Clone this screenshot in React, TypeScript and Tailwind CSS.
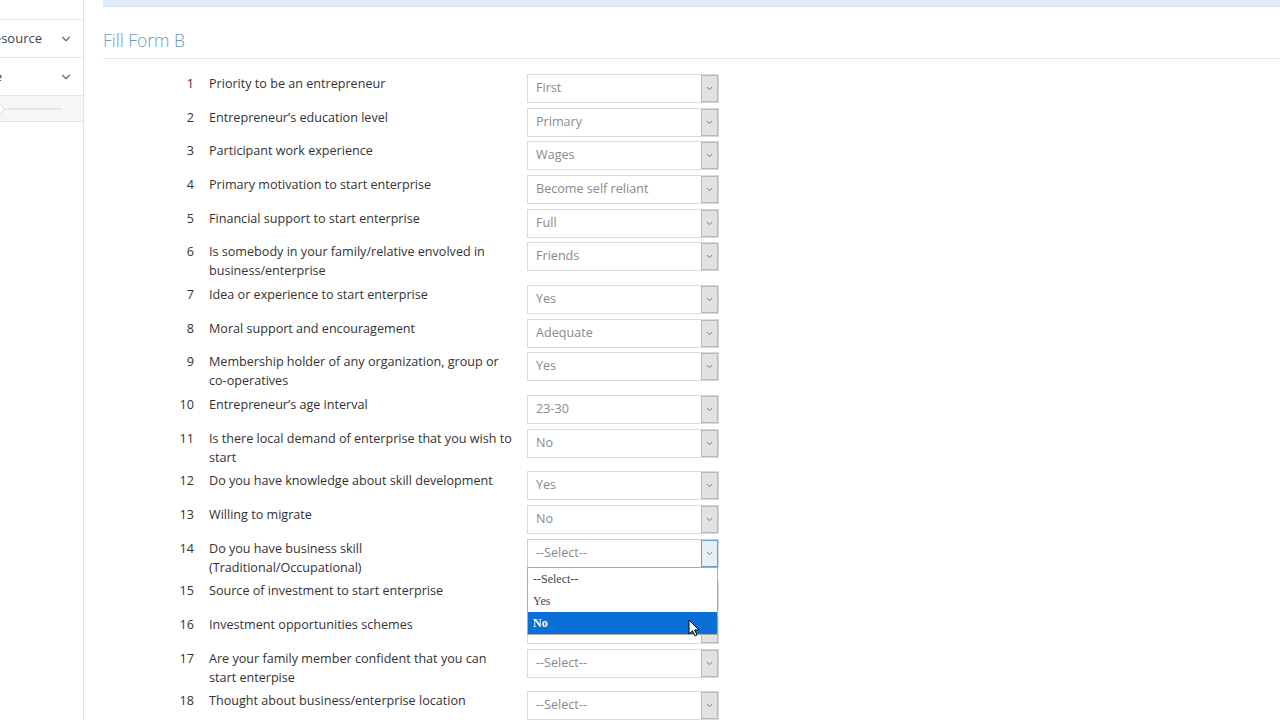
import { ChevronDown } from 'lucide-react'

interface Question {
  no: number
  lines: string[]
  value: string
}

const questions: Question[] = [
  { no: 1, lines: ['Priority to be an entrepreneur'], value: 'First' },
  { no: 2, lines: ['Entrepreneur’s education level'], value: 'Primary' },
  { no: 3, lines: ['Participant work experience'], value: 'Wages' },
  { no: 4, lines: ['Primary motivation to start enterprise'], value: 'Become self reliant' },
  { no: 5, lines: ['Financial support to start enterprise'], value: 'Full' },
  { no: 6, lines: ['Is somebody in your family/relative envolved in', 'business/enterprise'], value: 'Friends' },
  { no: 7, lines: ['Idea or experience to start enterprise'], value: 'Yes' },
  { no: 8, lines: ['Moral support and encouragement'], value: 'Adequate' },
  { no: 9, lines: ['Membership holder of any organization, group or', 'co-operatives'], value: 'Yes' },
  { no: 10, lines: ['Entrepreneur’s age interval'], value: '23-30' },
  { no: 11, lines: ['Is there local demand of enterprise that you wish to', 'start'], value: 'No' },
  { no: 12, lines: ['Do you have knowledge about skill development'], value: 'Yes' },
  { no: 13, lines: ['Willing to migrate'], value: 'No' },
  { no: 14, lines: ['Do you have business skill', '(Traditional/Occupational)'], value: '--Select--' },
  { no: 15, lines: ['Source of investment to start enterprise'], value: '--Select--' },
  { no: 16, lines: ['Investment opportunities schemes'], value: '--Select--' },
  { no: 17, lines: ['Are your family member confident that you can', 'start enterpise'], value: '--Select--' },
  { no: 18, lines: ['Thought about business/enterprise location'], value: '--Select--' },
]

function Caret() {
  return (
    <svg width="7" height="5" viewBox="0 0 7 5" fill="none">
      <path d="M0.8 1 L3.5 3.6 L6.2 1" stroke="#7a7a7a" strokeWidth="1" />
    </svg>
  )
}

// mouse pointer resting over the highlighted option
function Cursor() {
  return (
    <svg width="12" height="18" viewBox="0 0 12 18" className="absolute left-[160px] top-[51px]">
      <path d="M1 1 L1 15 L4.5 11.8 L7 17 L9 16 L6.6 11 L11 11 Z" fill="#fff" stroke="#000" strokeWidth="1" strokeLinejoin="round" />
    </svg>
  )
}

function SelectBox({ value, open }: { value: string; open?: boolean }) {
  return (
    <div className="relative w-[192px] shrink-0">
      <div
        className={
          open
            ? 'flex h-[29px] border border-[#efc88f] border-b-[#d8d8d8] border-r-[#d8d8d8] bg-white'
            : 'flex h-[29px] border border-[#dadada] bg-white'
        }
      >
        <div className="flex flex-1 items-center pl-[8px] text-[12.6px] text-[#8a8a8a]">{value}</div>
        <div
          className={
            open
              ? 'flex w-[17px] items-center justify-center border border-[#6a9fd4] bg-[#e6f0fa]'
              : 'flex w-[17px] items-center justify-center border border-[#b8b8b8] bg-[#e2e2e2]'
          }
        >
          <Caret />
        </div>
      </div>
      {open && (
        <div className="absolute left-0 top-[28px] z-10 w-[191px] border border-[#a9a9a9] bg-white font-['Liberation_Serif',serif] text-[12px]">
          <div className="flex h-[22px] items-center pl-[5px] text-[#444]">--Select--</div>
          <div className="flex h-[22px] items-center pl-[5px] text-[#444]">Yes</div>
          <div className="flex h-[22px] items-center bg-[#0a6fd6] pl-[5px] font-bold text-white">No</div>
          <Cursor />
        </div>
      )}
    </div>
  )
}

function Sidebar() {
  return (
    <div className="w-[84px] shrink-0 border-r border-[#e2e2e2] text-[13px] text-[#444]">
      <div className="flex h-[20px] items-start justify-end overflow-hidden border-b border-[#e6e6e6] pr-[12px]">
        <ChevronDown className="-mt-[10px] h-[14px] w-[14px] text-[#666]" />
      </div>
      <div className="flex h-[38px] items-center border-b border-[#e6e6e6]">
        <div className="flex w-[42px] justify-end overflow-hidden">
          <span className="whitespace-nowrap">Human Resource</span>
        </div>
        <ChevronDown className="ml-[17px] h-[14px] w-[14px] text-[#666]" />
      </div>
      <div className="flex h-[38px] items-center border-b border-[#e6e6e6]">
        <div className="flex w-[42px] justify-end overflow-hidden">
          <span className="mr-[40px] whitespace-nowrap">Finance</span>
        </div>
        <ChevronDown className="ml-[17px] h-[14px] w-[14px] text-[#666]" />
      </div>
      <div className="flex h-[26px] items-center border-b border-[#e2e2e2] bg-[#f6f6f6]">
        <div className="-ml-[6px] h-[10px] w-[10px] shrink-0 rounded-full border border-[#dcdcdc] bg-white" />
        <div className="h-[2px] w-[58px] bg-[#e8e8e8]" />
      </div>
    </div>
  )
}

export default function App() {
  return (
    <div className="flex h-[720px] overflow-hidden bg-white font-['Open_Sans',sans-serif] text-[#333]">
      <Sidebar />
      <div className="flex-1 pl-[19px]">
        <div className="h-[7px] border-b border-[#d3e2ef] bg-[#deeaf5]" />
        <div className="mt-[19px] border-b border-[#e6e6e6] pb-[4px]">
          <h1 className="text-[17.5px] font-light leading-[28px] text-[#6b9ac4]">Fill Form B</h1>
        </div>
        <div className="mt-[15px] pl-[67px]">
          {questions.map((q) => (
            <div key={q.no} className="mb-[4.67px] flex items-start">
              <div className="w-[24px] shrink-0 text-right text-[12.6px] leading-[19px]">{q.no}</div>
              <div className="ml-[15px] w-[306px] shrink-0 text-[12.6px] leading-[19px]">
                {q.lines.map((l, i) => (
                  <div key={i} className="whitespace-nowrap">
                    {l}
                  </div>
                ))}
              </div>
              <div className="ml-[12px]">
                <SelectBox value={q.value} open={q.no === 14} />
              </div>
            </div>
          ))}
        </div>
      </div>
    </div>
  )
}
